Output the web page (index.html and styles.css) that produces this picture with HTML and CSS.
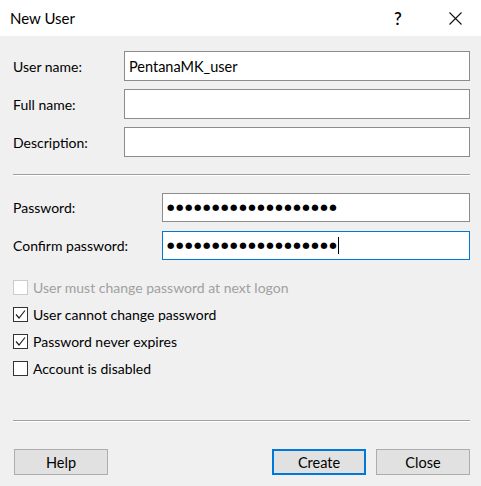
FILE: index.html
```html
<!DOCTYPE html>
<html>
<head>
<meta charset="utf-8">
<link rel="stylesheet" href="styles.css">
</head>
<body>
<div class="dialog">
  <div class="titlebar">
    <span class="title">New User</span>
    <span class="help-q">?</span>
    <span class="close-x">
      <svg width="13" height="13" viewBox="0 0 13 13"><path d="M0.5 0.5 L12.5 12.5 M12.5 0.5 L0.5 12.5" stroke="#111" stroke-width="1.1" fill="none"/></svg>
    </span>
  </div>
  <div class="content">
    <div class="group group-top">
      <div class="row">
        <label class="lbl">User name:</label>
        <div class="field field-wide"><span class="val">PentanaMK_user</span></div>
      </div>
      <div class="row">
        <label class="lbl">Full name:</label>
        <div class="field field-wide"></div>
      </div>
      <div class="row">
        <label class="lbl">Description:</label>
        <div class="field field-wide"></div>
      </div>
    </div>
    <div class="sep"></div>
    <div class="group group-pw">
      <div class="row row-pw">
        <label class="lbl">Password:</label>
        <div class="field field-pw"><span class="dots">●●●●●●●●●●●●●●●●●●●</span></div>
      </div>
      <div class="row row-pw">
        <label class="lbl">Confirm password:</label>
        <div class="field field-pw focused"><span class="dots">●●●●●●●●●●●●●●●●●●●</span><span class="caret"></span></div>
      </div>
    </div>
    <div class="checks">
      <div class="chk disabled"><span class="box"></span><span class="ctext">User must change password at next logon</span></div>
      <div class="chk"><span class="box"><svg width="13" height="13" viewBox="0 0 13 13"><path d="M2 6.5 L5 10 L11 2.5" stroke="#222" stroke-width="1.2" fill="none"/></svg></span><span class="ctext">User cannot change password</span></div>
      <div class="chk"><span class="box"><svg width="13" height="13" viewBox="0 0 13 13"><path d="M2 6.5 L5 10 L11 2.5" stroke="#222" stroke-width="1.2" fill="none"/></svg></span><span class="ctext">Password never expires</span></div>
      <div class="chk"><span class="box"></span><span class="ctext">Account is disabled</span></div>
    </div>
    <div class="sep sep-bottom"></div>
    <div class="buttons">
      <button class="btn help-btn">Help</button>
      <div class="spacer"></div>
      <button class="btn default">Create</button>
      <button class="btn">Close</button>
    </div>
  </div>
</div>
</body>
</html>
```

FILE: styles.css
```css
html, body {
  margin: 0;
  padding: 0;
}
body {
  background: #f0f0f0;
  font-family: "Lato", "Open Sans", sans-serif;
  font-size: 14px;
  color: #000;
  width: 481px;
  height: 486px;
  overflow: hidden;
}
.dialog {
  width: 481px;
}
.titlebar {
  height: 36px;
  background: #fff;
  display: flex;
  align-items: center;
  padding-left: 10px;
  box-sizing: border-box;
}
.title {
  font-size: 15px;
  flex: 1;
}
.help-q {
  font-size: 17px;
  font-weight: 600;
  width: 12px;
  margin-right: 43px;
}
.close-x {
  display: flex;
  margin-right: 19px;
}
.content {
  padding: 0 11px 0 13px;
}
.group-top {
  padding-top: 15px;
  display: flex;
  flex-direction: column;
  gap: 8px;
}
.row {
  display: flex;
  align-items: center;
  height: 30px;
}
.lbl {
  flex: 1;
}
.field {
  height: 100%;
  box-sizing: border-box;
  background: #fff;
  border: 1px solid #8c8c8c;
  display: flex;
  align-items: center;
  padding-left: 4px;
}
.field-wide {
  width: 346px;
}
.val {
  font-size: 14.5px;
}
.sep {
  margin-top: 17px;
  height: 1px;
  border-top: 1px solid #a0a0a0;
  background: #fff;
}
.group-pw {
  margin-top: 17px;
  display: flex;
  flex-direction: column;
  gap: 9px;
}
.row-pw {
  height: 29px;
}
.field-pw {
  width: 308px;
}
.focused {
  border-color: #0078d7;
}
.dots {
  font-family: "DejaVu Sans", sans-serif;
  font-size: 8.5px;
  letter-spacing: 1.6px;
  line-height: 1;
}
.caret {
  display: inline-block;
  width: 1px;
  height: 17px;
  background: #000;
  margin-left: 0px;
}
.checks {
  margin-top: 14px;
  display: flex;
  flex-direction: column;
}
.chk {
  height: 27px;
  display: flex;
  align-items: center;
}
.box {
  width: 15px;
  height: 15px;
  box-sizing: border-box;
  border: 1px solid #333;
  background: #fff;
  margin-right: 5px;
  display: flex;
  align-items: center;
  justify-content: center;
}
.disabled .box {
  border-color: #cccccc;
}
.disabled .ctext {
  color: #a0a0a0;
}
.sep-bottom {
  margin-top: 38px;
}
.buttons {
  margin-top: 27px;
  display: flex;
  gap: 10px;
  padding-left: 1px;
}
.spacer {
  flex: 1;
}
.btn {
  width: 94px;
  height: 26px;
  box-sizing: border-box;
  background: #e1e1e1;
  border: 1px solid #adadad;
  font-family: inherit;
  font-size: 14.5px;
  color: #000;
  padding: 0;
  margin: 0;
}
.btn.default {
  border: 2px solid #0078d7;
}
```
